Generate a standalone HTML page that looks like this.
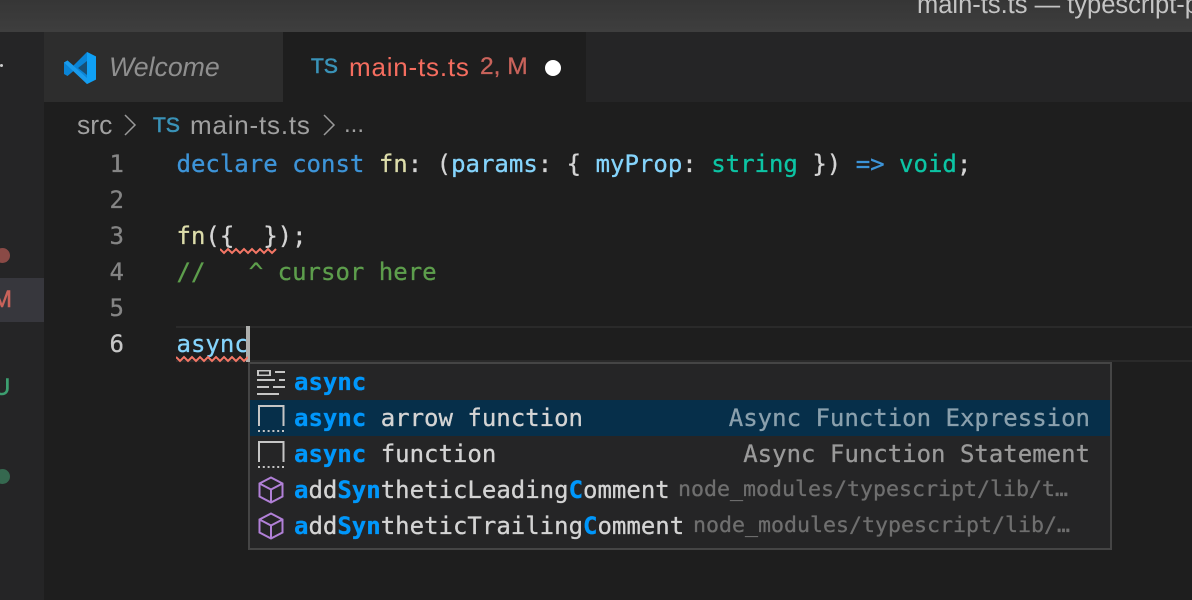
<!DOCTYPE html>
<html><head><meta charset="utf-8"><style>
html,body{margin:0;padding:0;width:1192px;height:600px;overflow:hidden;background:#1e1e1e}
div,span{white-space:pre}
.a{position:absolute}
.m{position:absolute;font:24px/36px "DejaVu Sans Mono",monospace;color:#d4d4d4;height:36px;-webkit-text-stroke:.3px currentColor}
.s{position:absolute;font-family:"Liberation Sans",sans-serif;font-size:24px;line-height:36px}
.ln{position:absolute;left:96px;width:28px;text-align:right;font:24px/36px "DejaVu Sans Mono",monospace;color:#858585;-webkit-text-stroke:.3px currentColor}
.ts{font-size:21px;color:#3a93b8;-webkit-text-stroke:.6px #3a93b8}
.k{color:#3d94d8}.f{color:#dcdcaa}.v{color:#85d4fc}.t{color:#0cc4a4}.c{color:#5d9e4c}.b{color:#0097fb;font-weight:bold}
</style></head><body>
<div class="a" style="left:0;top:0;width:1192px;height:32px;background:linear-gradient(#363636,#3e3e3e)"></div>
<div class="s" style="left:917px;top:-13px;color:#c4c4c4;font-size:25.5px">main-ts.ts — typescript-p</div>

<div class="a" style="left:0;top:32px;width:44px;height:568px;background:#252526"></div>
<div class="a" style="left:0;top:64px;width:3px;height:3px;border-radius:2px;background:#ccc"></div>
<div class="a" style="left:-5px;top:248px;width:15px;height:15px;border-radius:8px;background:#8a4a46"></div>
<div class="a" style="left:0;top:278px;width:44px;height:44px;background:#37373d"></div>
<div class="s" style="left:-8px;top:282px;color:#c9635b;-webkit-text-stroke:.5px #c9635b">M</div>
<div class="s" style="left:-7px;top:370px;color:#3d9f70;-webkit-text-stroke:.5px #3d9f70">U</div>
<div class="a" style="left:-5px;top:469px;width:15px;height:15px;border-radius:8px;background:#35684f"></div>

<div class="a" style="left:44px;top:32px;width:1148px;height:70px;background:#252526"></div>
<div class="a" style="left:44px;top:32px;width:239px;height:70px;background:#2d2d2d"></div>
<div class="a" style="left:283px;top:32px;width:303px;height:70px;background:#1e1e1e"></div>
<svg class="a" style="left:62px;top:50px" width="36" height="36" viewBox="0 0 36 36">
<path d="M25 2 L34 6.500 V29.500 L25 34 L11.500 21 L5.500 26 L2 24 V12.500 L5.500 10.500 L11.500 15.500Z" fill="#0a84d6"/>
<path d="M25 2 L34 6.500 V29.500 L25 34Z" fill="#0fa0f5"/>
<path d="M25 11 L16 18 L25 25Z" fill="#252526" opacity=".55"/>
<path d="M2 12.500 L5.500 10.500 L25 28 V34 Z" fill="#1a9bec"/>
</svg>
<div class="s" style="left:109px;top:49px;font-style:italic;color:#8f8f8f;font-size:26.700px">Welcome</div>
<div class="s ts" style="left:311px;top:49px">TS</div>
<div class="s" style="left:349px;top:49px;color:#f56d5f;font-size:26px;letter-spacing:.8px">main-ts.ts</div>
<div class="s" style="left:480px;top:49px;color:#c9635b;font-size:24.500px;-webkit-text-stroke:.3px #c9635b">2, M</div>
<div class="a" style="left:545px;top:60px;width:16px;height:16px;border-radius:8px;background:#fff"></div>

<div class="s" style="left:77px;top:107px;color:#a0a0a0;font-size:26.500px">src</div>
<svg class="a" style="left:123px;top:113px" width="14" height="24" viewBox="0 0 14 24"><path d="M2 2 L12 12 L2 22" fill="none" stroke="#999" stroke-width="1.500"/></svg>
<div class="s ts" style="left:153px;top:108px">TS</div>
<div class="s" style="left:190px;top:107px;color:#a0a0a0;font-size:26px;letter-spacing:.8px">main-ts.ts</div>
<svg class="a" style="left:322px;top:113px" width="14" height="24" viewBox="0 0 14 24"><path d="M2 2 L12 12 L2 22" fill="none" stroke="#999" stroke-width="1.500"/></svg>
<div class="s" style="left:344px;top:107px;color:#a0a0a0">...</div>

<div class="ln" style="top:146px">1</div>
<div class="ln" style="top:182px">2</div>
<div class="ln" style="top:218px">3</div>
<div class="ln" style="top:254px">4</div>
<div class="ln" style="top:290px">5</div>
<div class="ln" style="top:326px;color:#c6c6c6">6</div>

<div class="a" style="left:176px;top:326px;width:1016px;height:32px;border-top:2px solid #2a2a2a;border-bottom:2px solid #2a2a2a"></div>

<div class="m" style="left:176.500px;top:146px"><span class="k">declare</span> <span class="k">const</span> <span class="f">fn</span>: (<span class="v">params</span>: { <span class="v">myProp</span>: <span class="t">string</span> }) <span class="k">=&gt;</span> <span class="t">void</span>;</div>
<div class="m" style="left:176.500px;top:218px"><span class="f">fn</span>({  });</div>
<div class="m" style="left:176.500px;top:254px"><span class="c">//   ^ cursor here</span></div>
<div class="m" style="left:176.500px;top:326px"><span class="v">async</span></div>
<div class="a" style="left:246px;top:326px;width:4px;height:36px;background:#aeafad"></div>

<svg class="a" style="left:220px;top:247px" width="58" height="8" viewBox="0 0 58 8"><path d="M0 2 l4 4 l4 -4 l4 4 l4 -4 l4 4 l4 -4 l4 4 l4 -4 l4 4 l4 -4 l4 4 l4 -4 l4 4 l4 -4" fill="none" stroke="#f47766" stroke-width="2"/></svg>
<svg class="a" style="left:176px;top:355px" width="72" height="8" viewBox="0 0 72 8"><path d="M0 2 l4 4 l4 -4 l4 4 l4 -4 l4 4 l4 -4 l4 4 l4 -4 l4 4 l4 -4 l4 4 l4 -4 l4 4 l4 -4 l4 4 l4 -4 l4 4 l4 -4" fill="none" stroke="#f47766" stroke-width="2"/></svg>

<div class="a" style="left:248px;top:362px;width:860px;height:184px;border:2px solid #454545;background:#252526"></div>
<div class="a" style="left:250px;top:400px;width:860px;height:36px;background:#062f4a"></div>

<svg class="a" style="left:256px;top:369px" width="30" height="26" viewBox="0 0 30 26" fill="#c5c5c5"><path d="M1 1h14v6H1zM3 2.500v3h10v-3zM19 2h10v2H19zM1 10h18v2H1zM23 10h6v2h-6zM1 17h12v2H1zM17 17h12v2H17zM1 24h22v2H1z" fill-rule="evenodd"/></svg>

<svg class="a" style="left:258px;top:404px" width="28" height="28" viewBox="0 0 28 28" fill="none" stroke="#c5c5c5" stroke-width="2"><path d="M1 22V2h24.500v20"/><path d="M0 27h27" stroke-dasharray="2 2.800"/></svg>
<svg class="a" style="left:258px;top:440px" width="28" height="28" viewBox="0 0 28 28" fill="none" stroke="#c5c5c5" stroke-width="2"><path d="M1 22V2h24.500v20"/><path d="M0 27h27" stroke-dasharray="2 2.800"/></svg>

<svg class="a" style="left:258px;top:476px" width="26" height="28" viewBox="0 0 26 28" fill="none" stroke="#b180d7" stroke-width="2"><path d="M13 1.500L24.500 7.500V20.500L13 26.500L1.500 20.500V7.500Z"/><path d="M1.500 7.500L13 13.500L24.500 7.500M13 13.500V26.500"/></svg>
<svg class="a" style="left:258px;top:512px" width="26" height="28" viewBox="0 0 26 28" fill="none" stroke="#b180d7" stroke-width="2"><path d="M13 1.500L24.500 7.500V20.500L13 26.500L1.500 20.500V7.500Z"/><path d="M1.500 7.500L13 13.500L24.500 7.500M13 13.500V26.500"/></svg>

<div class="m" style="left:294px;top:364px"><span class="b">async</span></div>
<div class="m" style="left:294px;top:400px"><span class="b">async</span> arrow function</div>
<div class="m" style="left:294px;top:436px"><span class="b">async</span> function</div>
<div class="m" style="left:294px;top:472px"><span class="b">a</span>dd<span class="b">Syn</span>thetic<span>Leading</span><span class="b">C</span>omment</div>
<div class="m" style="left:294px;top:508px"><span class="b">a</span>dd<span class="b">Syn</span>thetic<span>Trailing</span><span class="b">C</span>omment</div>

<div class="m" style="right:102px;top:400px;color:#8aa0ad">Async Function Expression</div>
<div class="m" style="right:102px;top:436px;color:#9a9a9a">Async Function Statement</div>
<div class="m" style="left:678px;top:472px;color:#6f6f6f;font-size:21.600px">node_modules/typescript/lib/t…</div>
<div class="m" style="left:693px;top:508px;color:#6f6f6f;font-size:21.600px">node_modules/typescript/lib/…</div>
</body></html>
